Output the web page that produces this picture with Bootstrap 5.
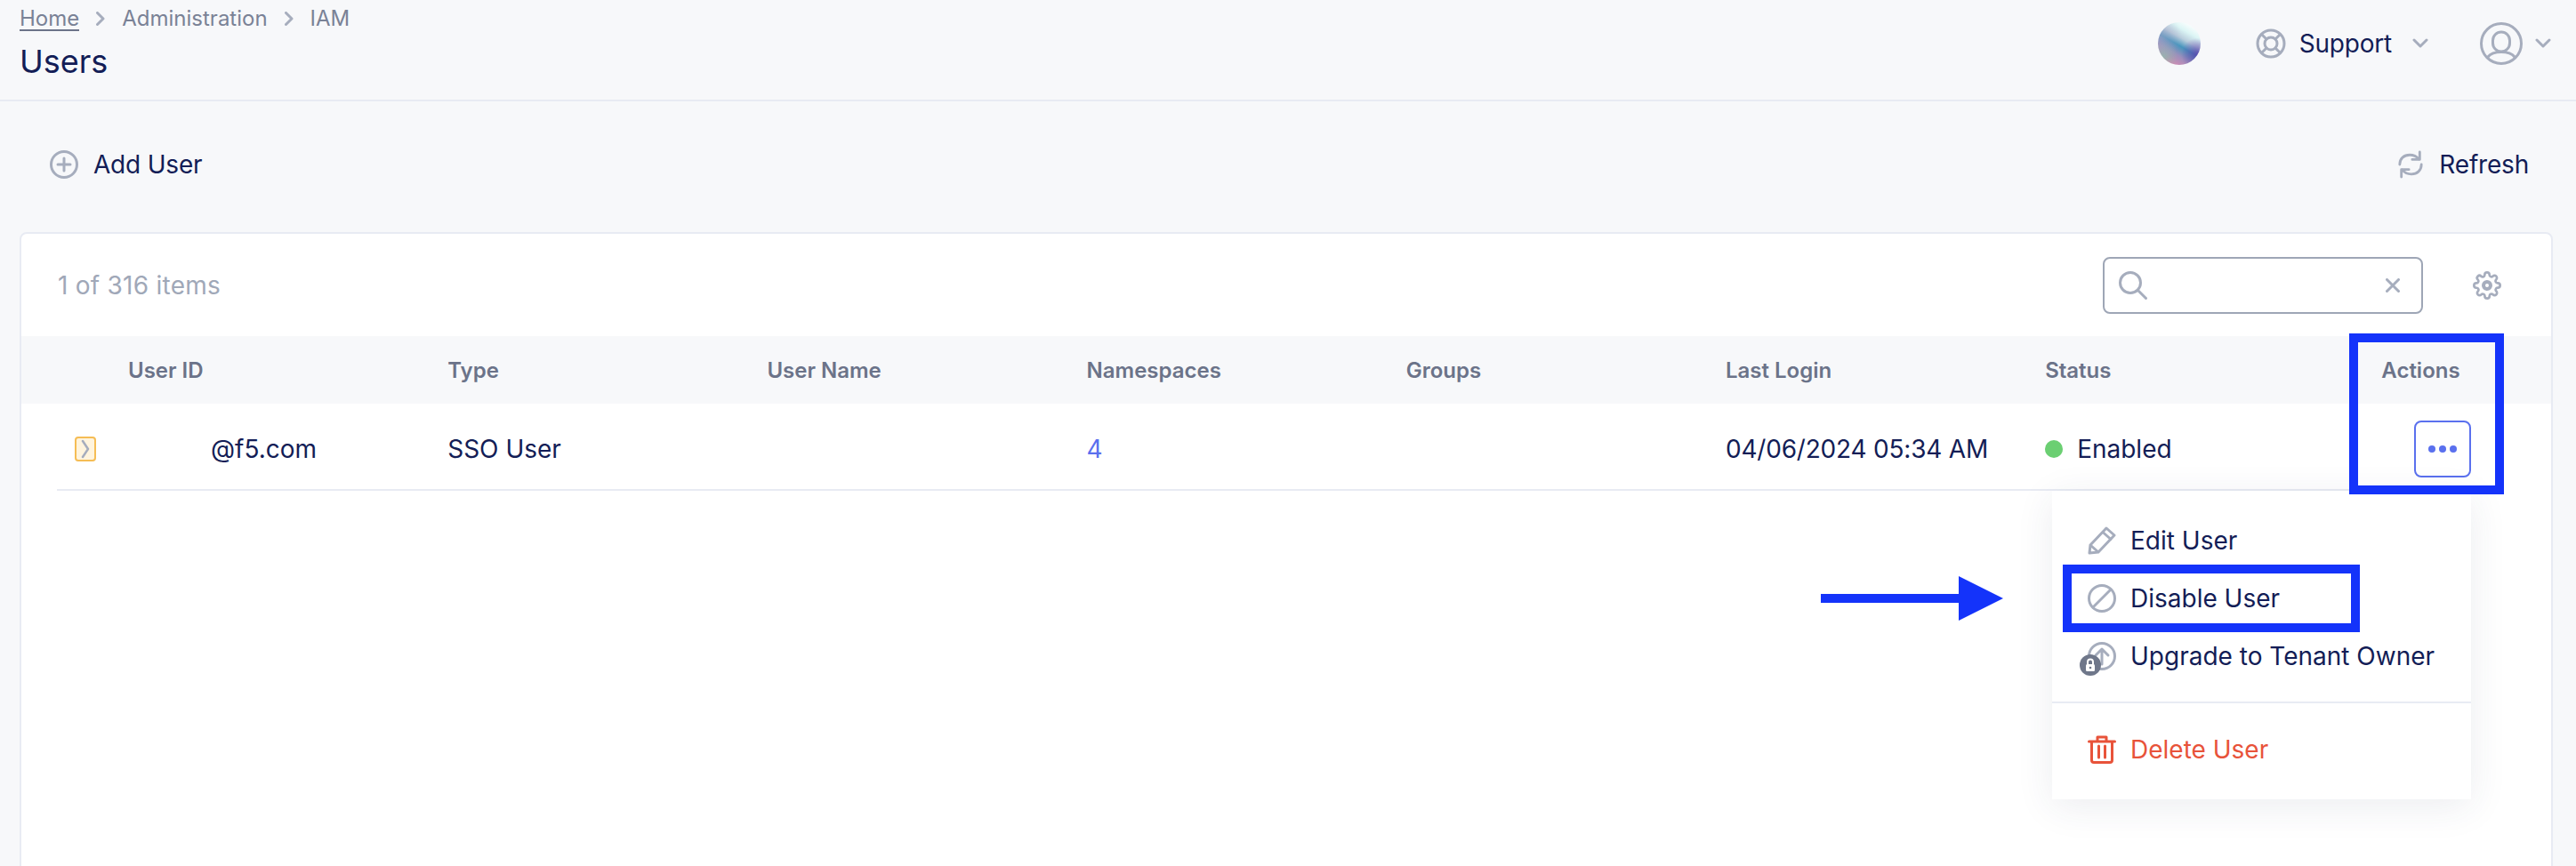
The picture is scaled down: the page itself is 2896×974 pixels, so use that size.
<!DOCTYPE html>
<html lang="en">
<head>
<meta charset="utf-8">
<title>Users</title>
<link href="https://cdn.jsdelivr.net/npm/bootstrap@5.3.0/dist/css/bootstrap.min.css" rel="stylesheet">
<style>
html,body{height:100%;}
body{background:#f7f8fa;color:#131d56;font-family:Inter,"Liberation Sans",sans-serif;font-size:28px;overflow:hidden;position:relative;}
svg{display:block;flex:none;}
.ic{fill:none;stroke:#a6adbd;stroke-width:3;stroke-linecap:round;stroke-linejoin:round;}
.top-head{height:114px;border-bottom:2px solid #e8ebf3;padding:0 28px 0 22px;}
.crumbs{font-size:24px;line-height:29px;color:#7a8296;padding-top:6px;}
.crumbs u{text-decoration:none;border-bottom:2px solid #6b7389;color:#7a8296;display:block;line-height:27px;height:28px;}
.crumb-gap{gap:19px;}
.page-name{font-size:36px;line-height:44px;margin:12px 0 0;font-weight:400;}
.avatar{width:48px;height:48px;border-radius:50%;margin-right:62px;background:radial-gradient(circle at 5% 35%,rgba(170,165,200,.55),rgba(170,165,200,0) 45%),radial-gradient(circle at 92% 75%,rgba(90,60,170,.8),rgba(90,60,170,0) 32%),radial-gradient(circle at 12% 80%,rgba(130,195,170,.7),rgba(130,195,170,0) 30%),linear-gradient(210deg,#fff 10%,#dcf5f5 26%,#b9cddc 40%,#4795bd 53%,#9a8fbc 68%,#dc8bb2 90%);}
.head-right{padding-top:25px;}
.sup-text{margin:0 23px 0 15px;line-height:48px;letter-spacing:-.2px;}
.user-ic{margin:0 14px 0 58px;}
.tools{height:147px;padding:0 53px 5px 56px;}
.tool-text{margin-left:17px;letter-spacing:-.2px;}
.panel{margin:0 26px 0 22px;height:740px;background:#fff;border:2px solid #e8ebf3;border-radius:8px 8px 0 0;position:relative;}
.panel-top{height:115px;padding:0 56px 0 41px;}
.cnt{color:#a0a8b8;letter-spacing:.25px;}
.finder{width:360px;height:64px;border:2px solid #9ea6b6;border-radius:8px;background:#fff;padding:0 24px 0 15px;margin-right:56px;}
.ugrid{display:grid;grid-template-columns:80px repeat(7,359.2px) 1fr;align-items:center;}
.uhead{height:76px;background:#f7f8fa;padding:2px 0 0 40px;font-size:24px;font-weight:600;color:#6b7389;}
.urow{height:98px;margin:0 88px 0 40px;padding-top:5px;border-bottom:2px solid #e8ebf3;}
.expander{width:24px;height:28px;margin-left:20px;background:#fff4dd;border:2px solid #f5bd55;border-radius:4px;}
.id-part{margin-left:93px;}
.when{letter-spacing:-.2px;}
.ns-link{color:#5a70ee;text-decoration:none;}
.state-dot{width:20px;height:20px;background:#6bcf72;border-radius:50%;margin-right:16px;}
.act-head{padding-left:19px;}
.dots-btn{width:64px;height:64px;margin-left:56px;padding:0;border:2px solid #5a70ee;border-radius:8px;background:#fff;}
.dots-btn:hover{background:#fff;border-color:#5a70ee;}
.act-menu{position:absolute;left:2283px;top:289px;width:471px;height:347px;background:#fff;box-shadow:0 8px 40px rgba(40,50,90,.09);padding-top:23px;}
.act-item{height:65px;padding-left:40px;gap:16px;line-height:1;}
.act-rule{height:2px;background:#e8ebf3;margin:19px 0 19px;opacity:1;border:0;}
.act-danger{color:#e8533a;height:66px;}
.mark-box{position:absolute;border:10px solid #1433fa;pointer-events:none;}
.mark-a{left:2641px;top:375px;width:174px;height:181px;}
.mark-b{left:2319px;top:635px;width:334px;height:76px;}
.mark-arrow{position:absolute;left:2047px;top:648px;}
.lock-wrap{position:relative;width:32px;height:32px;}
.lock-wrap .lock-badge{position:absolute;left:-9px;top:14px;}
</style>
</head>
<body>
<header class="top-head d-flex justify-content-between">
  <div>
    <div class="crumbs d-flex align-items-center crumb-gap">
      <u>Home</u>
      <svg width="10" height="16" viewBox="0 0 10 16" class="ic"><path d="M1.5 1.5 8 8l-6.500 6.500"/></svg>
      <span>Administration</span>
      <svg width="10" height="16" viewBox="0 0 10 16" class="ic"><path d="M1.500 1.500 8 8l-6.500 6.500"/></svg>
      <span>IAM</span>
    </div>
    <h1 class="page-name">Users</h1>
  </div>
  <div class="head-right d-flex align-items-start">
    <div class="avatar"></div>
    <div class="d-flex align-items-center">
      <svg width="34" height="34" viewBox="0 0 34 34" class="ic"><circle cx="17" cy="17" r="15"/><circle cx="17" cy="17" r="7"/><path d="m7 7 5 5m10 0 5-5M7 27l5-5m10 0 5 5"/></svg>
      <span class="sup-text">Support</span>
      <svg width="18" height="12" viewBox="0 0 18 12" class="ic"><path d="m2 2 7 7 7-7"/></svg>
      <svg width="48" height="48" viewBox="0 0 48 48" class="ic user-ic"><circle cx="24" cy="24" r="22.500"/><rect x="14.500" y="11" width="19" height="22" rx="9.500"/><path d="M9 39c3-4 9-5.500 15-5.500S36 35 39 39"/></svg>
      <svg width="18" height="12" viewBox="0 0 18 12" class="ic"><path d="m2 2 7 7 7-7"/></svg>
    </div>
  </div>
</header>
<section class="tools d-flex justify-content-between align-items-center">
  <div class="d-flex align-items-center">
    <svg width="32" height="32" viewBox="0 0 32 32" class="ic"><circle cx="16" cy="16" r="14.500"/><path d="M16 9v14M9 16h14"/></svg>
    <span class="tool-text">Add User</span>
  </div>
  <div class="d-flex align-items-center">
    <svg width="30" height="34" viewBox="0 0 32 34" class="ic"><path d="M3 17C3 10 8 5.500 15 5.500c4 0 8 1.500 11 5M29 17c0 7-5 11.500-12 11.500-4 0-8-1.500-11-5"/><path d="M27 2v9h-9M5 32v-9h9"/></svg>
    <span class="tool-text">Refresh</span>
  </div>
</section>
<main class="panel">
  <div class="panel-top d-flex justify-content-between align-items-center">
    <span class="cnt">1 of 316 items</span>
    <div class="d-flex align-items-center">
      <div class="finder d-flex justify-content-between align-items-center">
        <svg width="34" height="34" viewBox="0 0 34 34" class="ic"><circle cx="14" cy="14" r="11.500"/><path d="m22.500 22.500 9 9"/></svg>
        <svg width="16" height="16" viewBox="0 0 16 16" class="ic"><path d="m1.500 1.500 13 13m0-13-13 13"/></svg>
      </div>
      <svg width="32" height="34" viewBox="0 0 24 24" class="ic gear-ic"><circle cx="12" cy="12" r="3"/><path stroke-width="2" d="M19.400 15a1.650 1.650 0 0 0 .33 1.820l.06.06a2 2 0 1 1-2.830 2.830l-.06-.06a1.650 1.650 0 0 0-1.820-.33 1.650 1.650 0 0 0-1 1.510V21a2 2 0 0 1-4 0v-.09A1.650 1.650 0 0 0 9 19.400a1.650 1.650 0 0 0-1.820.33l-.06.06a2 2 0 1 1-2.830-2.830l.06-.06a1.650 1.650 0 0 0 .33-1.820 1.650 1.650 0 0 0-1.510-1H3a2 2 0 0 1 0-4h.09A1.650 1.650 0 0 0 4.600 9a1.650 1.650 0 0 0-.33-1.820l-.06-.06a2 2 0 1 1 2.830-2.830l.06.06a1.650 1.650 0 0 0 1.820.33H9a1.650 1.650 0 0 0 1-1.510V3a2 2 0 0 1 4 0v.09a1.650 1.650 0 0 0 1 1.510 1.650 1.650 0 0 0 1.820-.33l.06-.06a2 2 0 1 1 2.830 2.830l-.06.06a1.650 1.650 0 0 0-.33 1.820V9a1.650 1.650 0 0 0 1.510 1H21a2 2 0 0 1 0 4h-.09a1.650 1.650 0 0 0-1.510 1z"/></svg>
    </div>
  </div>
  <div class="ugrid uhead">
    <span></span><span>User ID</span><span>Type</span><span>User Name</span><span>Namespaces</span><span>Groups</span><span>Last Login</span><span>Status</span><span class="act-head">Actions</span>
  </div>
  <div class="ugrid urow">
    <div class="expander d-flex align-items-center justify-content-center">
      <svg width="10" height="22" viewBox="0 0 10 22" class="ic"><path stroke-width="2.500" d="m2 2 6 9-6 9"/></svg>
    </div>
    <span class="id-part">@f5.com</span>
    <span>SSO User</span>
    <span></span>
    <a class="ns-link" href="#">4</a>
    <span></span>
    <span class="when">04/06/2024 05:34 AM</span>
    <span class="d-flex align-items-center"><i class="state-dot"></i>Enabled</span>
    <button class="btn dots-btn d-flex align-items-center justify-content-center" type="button" aria-label="Actions">
      <svg width="32" height="8" viewBox="0 0 32 8"><g fill="#5a70ee"><circle cx="4" cy="4" r="4"/><circle cx="16" cy="4" r="4"/><circle cx="28" cy="4" r="4"/></g></svg>
    </button>
  </div>
  <div class="act-menu">
    <div class="act-item d-flex align-items-center">
      <svg width="32" height="32" viewBox="0 0 32 32" class="ic"><path d="M2 30 3 21 21 2l9 8-18 19zM3 21l9 8M17 6.500l9 8"/></svg>
      <span>Edit User</span>
    </div>
    <div class="act-item d-flex align-items-center">
      <svg width="32" height="32" viewBox="0 0 32 32" class="ic"><circle cx="16" cy="16" r="14.500"/><path d="M6 26 26 6"/></svg>
      <span>Disable User</span>
    </div>
    <div class="act-item d-flex align-items-center">
      <div class="lock-wrap">
        <svg width="32" height="32" viewBox="0 0 32 32" class="ic"><circle cx="16" cy="16" r="14.500"/><path d="M16 25V8m-7 7 7-7 7 7"/></svg>
        <svg class="lock-badge" width="24" height="24" viewBox="0 0 24 24"><circle cx="12" cy="12" r="12" fill="#6f778a"/><rect x="7" y="11" width="10" height="8" rx="1.500" fill="#fff"/><path d="M9 11V8.500a3 3 0 0 1 6 0V11" fill="none" stroke="#fff" stroke-width="2"/><circle cx="12" cy="15" r="1.300" fill="#6f778a"/></svg>
      </div>
      <span>Upgrade to Tenant Owner</span>
    </div>
    <hr class="act-rule">
    <div class="act-item act-danger d-flex align-items-center">
      <svg width="32" height="32" viewBox="0 0 32 32" fill="none" stroke="#e8533a" stroke-width="3" stroke-linecap="round" stroke-linejoin="round"><path d="M1.500 7h29M11 7V2h10v5M4.500 7v21a2.500 2.500 0 0 0 2.500 2.500h18a2.500 2.500 0 0 0 2.500-2.500V7M12.500 12v13M19.500 12v13"/></svg>
      <span>Delete User</span>
    </div>
  </div>
</main>
<div class="mark-box mark-a"></div>
<div class="mark-box mark-b"></div>
<svg class="mark-arrow" width="205" height="50" viewBox="0 0 205 50"><path fill="#1433fa" d="M0 20h155V0l50 25-50 25V30H0z"/></svg>
</body>
</html>
